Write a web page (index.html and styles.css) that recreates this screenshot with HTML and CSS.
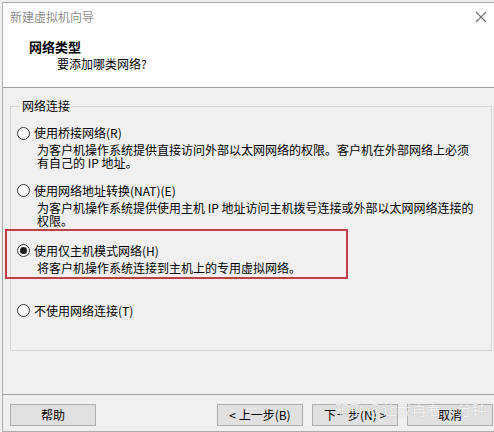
FILE: index.html
```html
<!DOCTYPE html>
<html lang="zh-CN">
<head>
<meta charset="utf-8">
<title>新建虚拟机向导</title>
<link rel="stylesheet" href="styles.css">
</head>
<body>
<div class="window">
  <div class="titlebar">
    <span class="title-text">新建虚拟机向导</span>
    <svg class="close" width="12" height="12" viewBox="0 0 12 12"><path d="M1 1 L11 11 M11 1 L1 11" stroke="#707070" stroke-width="1.1" fill="none"/></svg>
  </div>
  <div class="header">
    <div class="h-title">网络类型</div>
    <div class="h-sub">要添加哪类网络?</div>
  </div>
  <div class="main">
    <fieldset class="group">
      <legend class="legend">网络连接</legend>
      <div class="opt opt1">
        <div class="row"><span class="radio"></span><span>使用桥接网络(R)</span></div>
        <div class="desc">为客户机操作系统提供直接访问外部以太网网络的权限。客户机在外部网络上必须<br>有自己的 IP 地址。</div>
      </div>
      <div class="opt opt2">
        <div class="row"><span class="radio"></span><span>使用网络地址转换(NAT)(E)</span></div>
        <div class="desc">为客户机操作系统提供使用主机 IP 地址访问主机拨号连接或外部以太网网络连接的<br>权限。</div>
      </div>
      <div class="opt opt3">
        <div class="row"><span class="radio checked"></span><span>使用仅主机模式网络(H)</span></div>
        <div class="desc">将客户机操作系统连接到主机上的专用虚拟网络。</div>
      </div>
      <div class="opt opt4">
        <div class="row"><span class="radio"></span><span>不使用网络连接(T)</span></div>
      </div>
    </fieldset>
  </div>
  <div class="footer">
    <button class="btn">帮助</button>
    <div class="spacer"></div>
    <div class="btn-group">
      <button class="btn">&lt; 上一步(B)</button>
      <button class="btn">下一步(N) &gt;</button>
      <button class="btn">取消</button>
    </div>
  </div>
  <div class="highlight"></div>
  <div class="watermark">知乎 @让我再看一分钟</div>
</div>
</body>
</html>
```

FILE: styles.css
```css
* { box-sizing: border-box; }
html, body { margin: 0; padding: 0; }
body {
  width: 494px;
  height: 432px;
  overflow: hidden;
  background: #f0f0f0;
  font-family: "Noto Sans CJK SC", "Microsoft YaHei", sans-serif;
  font-size: 12px;
  color: #000;
}
.window {
  position: relative;
  margin: 2px 0 0 2px;
  width: 492px;
  height: 430px;
  border: 1px solid #ababab;
  border-right: none;
  display: flex;
  flex-direction: column;
  background: #f0f0f0;
}
.titlebar {
  height: 28px;
  background: #fff;
  display: flex;
  align-items: center;
  padding: 0 0 0 7px;
}
.title-text {
  color: #8e8e8e;
  font-size: 12px;
  line-height: 16px;
  flex: 1;
}
.close {
  margin-right: 7px;
  margin-top: 0;
}
.header {
  height: 57px;
  background: #fff;
  border-bottom: 1px solid #a0a0a0;
  padding-top: 8px;
}
.h-title {
  font-weight: bold;
  font-size: 13px;
  line-height: 16px;
  padding-left: 26px;
}
.h-sub {
  font-size: 12px;
  line-height: 17px;
  padding-left: 54px;
}
.main {
  flex: 1;
  padding: 0 2px 0 7px;
}
.group {
  margin: 10px 0 0 0;
  padding: 0 6px 31px 6px;
  border: 1px solid #d5d5d5;
  min-width: 0;
}
.legend {
  padding: 0 2px;
  margin-left: 3px;
  line-height: 16px;
  font-size: 12px;
}
.row {
  display: flex;
  align-items: center;
  line-height: 16px;
  height: 16px;
}
.radio {
  width: 13px;
  height: 13px;
  border: 1px solid #333;
  border-radius: 50%;
  background: #fff;
  margin-right: 4px;
  flex: none;
  display: flex;
  align-items: center;
  justify-content: center;
}
.radio.checked::after {
  content: "";
  width: 7px;
  height: 7px;
  border-radius: 50%;
  background: #1a1a1a;
}
.desc {
  margin-top: 2px;
  padding-left: 20px;
  line-height: 13px;
  white-space: nowrap;
}
.opt1 { margin-top: 11px; }
.opt2 { margin-top: 13.5px; }
.opt3 { margin-top: 16px; }
.opt3 .desc { margin-top: 2px; }
.opt4 { margin-top: 29px; }
.footer {
  height: 37px;
  border-top: 1px solid #a0a0a0;
  padding: 9px 1px 0 7px;
  display: flex;
  align-items: flex-start;
}
.spacer { flex: 1; }
.btn-group {
  display: flex;
  gap: 9px;
}
.btn {
  width: 86px;
  height: 22px;
  border: 1px solid #adadad;
  background: #e1e1e1;
  font-family: inherit;
  font-size: 12px;
  line-height: 18px;
  color: #000;
  padding: 0;
  margin: 0;
}
.highlight {
  position: absolute;
  left: 2px;
  top: 226px;
  width: 343px;
  height: 50px;
  border: 2px solid #bf3e48;
}
.watermark {
  position: absolute;
  left: 331px;
  top: 396px;
  font-size: 15px;
  line-height: 20px;
  color: rgba(255, 255, 255, 0.85);
  text-shadow: 0 0 1px rgba(0, 0, 0, 0.25);
  white-space: nowrap;
}
```
